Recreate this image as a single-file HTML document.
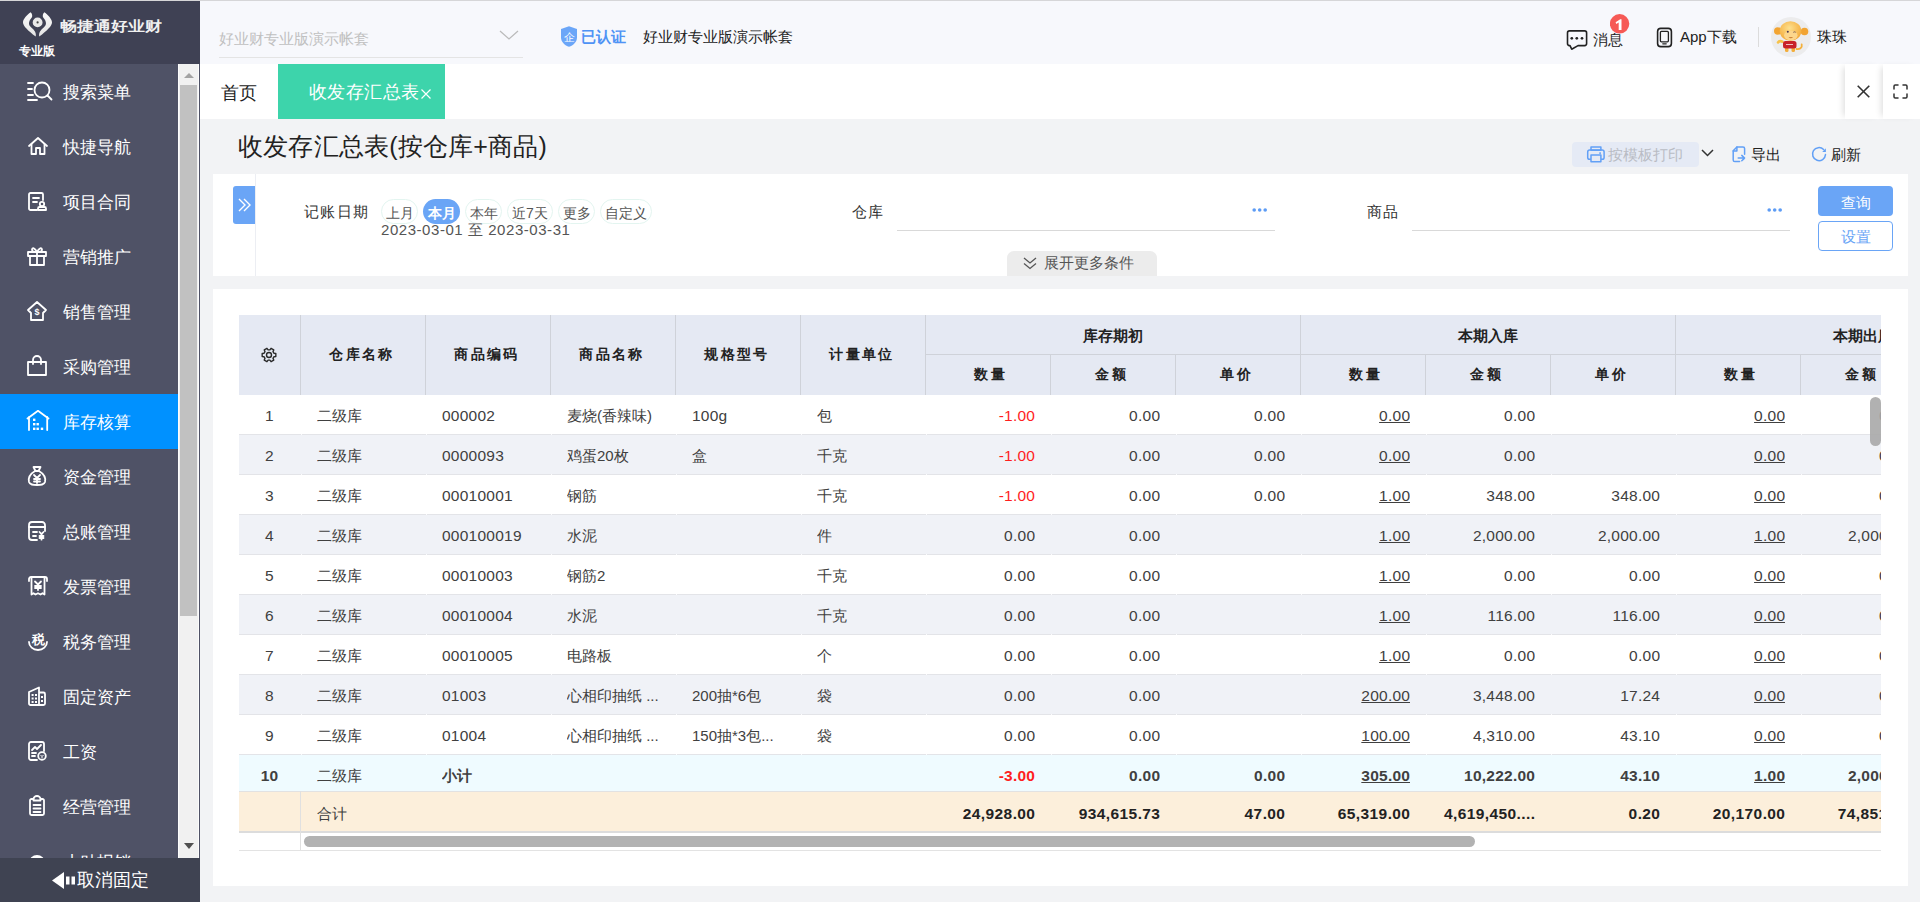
<!DOCTYPE html><html><head><meta charset="utf-8"><style>
*{box-sizing:border-box;margin:0;padding:0}
html,body{width:1920px;height:902px;overflow:hidden}
body{position:relative;background:#f2f3f5;font-family:"Liberation Sans", sans-serif;color:#333}
.a{position:absolute}
.t{position:absolute;white-space:nowrap;line-height:1}
.side{left:0;top:0;width:200px;height:902px;background:#4f5266}
.logo{left:0;top:0;width:200px;height:64px;background:#3f4154}
.mi{position:absolute;left:0;width:178px;height:55px}
.mi .tx{position:absolute;left:63px;top:18px;font-size:17.4px;line-height:21px;color:#fff;white-space:nowrap}
.mi svg{position:absolute;left:26px;top:16px}
.mi.act{background:#0091ff}
.hdr{left:200px;top:0;width:1720px;height:64px;background:#f7f8fc}
.tabs{left:200px;top:64px;width:1720px;height:55px;background:#fff}
.panel{background:#fff}
.th{position:absolute;background:#e5e9f3;font-weight:bold;font-size:14px;color:#222;text-align:center;letter-spacing:3px}
.cell{position:absolute;font-size:15.5px;line-height:42px;height:40px;white-space:nowrap;color:#404040;overflow:hidden}
.num{letter-spacing:0.25px}
.r{text-align:right}
.u{text-decoration:underline}
.red{color:#ff1e1e}
</style></head><body><div class="a side">
<div class="a logo"></div>
<svg class="a" style="left:18px;top:8px" width="40" height="32" viewBox="0 0 40 32">
<defs><linearGradient id="lg" x1="0" y1="0" x2="0" y2="1"><stop offset="0" stop-color="#fafafa"/><stop offset="1" stop-color="#e4e4e4"/></linearGradient></defs>
<path d="M12.6 4.3C9 7 5 11 5 14.5C5 18 10 22.5 17.7 28.6C18.6 25 16.5 22 12.8 19C10.2 16.8 10.3 13.5 13.8 9.5C14.8 8 14 5.5 12.6 4.3Z" fill="url(#lg)"/>
<path d="M26.4 4.3C30 7 34 11 34 14.5C34 18 29 22.5 21.3 28.6C20.4 25 22.5 22 26.2 19C28.8 16.8 28.7 13.5 25.2 9.5C24.2 8 25 5.5 26.4 4.3Z" fill="url(#lg)"/>
<circle cx="19.6" cy="14.4" r="4.9" fill="#e9e9e9"/><circle cx="19.6" cy="14.4" r="1.1" fill="#444"/>
</svg>
<div class="t" style="left:60px;top:19px;font-size:14px;font-weight:bold;color:#f0f0f0;transform:scaleX(1.21);transform-origin:0 0">畅捷通好业财</div>
<div class="t" style="left:19px;top:45px;font-size:12px;font-weight:bold;color:#fff">专业版</div>
<div class="a" style="left:0;top:64px;width:178px;height:794px;overflow:hidden">
<div class="mi" style="top:0px"><svg width="27" height="22" viewBox="0 0 27 22"><g stroke="#fff" stroke-width="1.8" fill="none" stroke-linecap="round" stroke-linejoin="round"><path d="M2 3h5M2 9h4M2 15h5M2 20h9"/><circle cx="16" cy="10" r="7.5"/><path d="M21.5 15.5l4 4"/></g></svg><div class="tx">搜索菜单</div></div>
<div class="mi" style="top:55px"><svg width="24" height="22" viewBox="0 0 24 22"><g stroke="#fff" stroke-width="1.8" fill="none" stroke-linecap="round" stroke-linejoin="round"><path d="M3 11L12 3l9 8"/><path d="M5.5 9.5v9.5h4.5v-6h4v6h4.5V9.5"/></g></svg><div class="tx">快捷导航</div></div>
<div class="mi" style="top:110px"><svg width="22" height="22" viewBox="0 0 22 22"><g stroke="#fff" stroke-width="1.8" fill="none" stroke-linecap="round" stroke-linejoin="round"><path d="M11 20H4.5A1.5 1.5 0 0 1 3 18.5V4.5A1.5 1.5 0 0 1 4.5 3h11A1.5 1.5 0 0 1 17 4.5V10"/><path d="M7 8h6M7 12h4"/><circle cx="16" cy="14" r="2.2"/><path d="M12 20v-1.5a1.5 1.5 0 0 1 1.5-1.5h5a1.5 1.5 0 0 1 1.5 1.5V20z"/></g></svg><div class="tx">项目合同</div></div>
<div class="mi" style="top:165px"><svg width="22" height="22" viewBox="0 0 22 22"><g stroke="#fff" stroke-width="1.8" fill="none" stroke-linecap="round" stroke-linejoin="round"><path d="M2 7h18v4H2zM4 11v9h14v-9M11 7v13"/><path d="M11 7C9 3 6 2 6 5c0 1 2 2 5 2M11 7c2-4 5-5 5-2 0 1-2 2-5 2"/></g></svg><div class="tx">营销推广</div></div>
<div class="mi" style="top:220px"><svg width="22" height="22" viewBox="0 0 22 22"><g stroke="#fff" stroke-width="1.8" fill="none" stroke-linecap="round" stroke-linejoin="round"><path d="M2 10l9-8 9 8-3 3v7H5v-7z"/></g><text x="11" y="15" font-size="9" font-weight="bold" fill="#fff" text-anchor="middle" font-family="Liberation Sans">$</text></svg><div class="tx">销售管理</div></div>
<div class="mi" style="top:275px"><svg width="22" height="22" viewBox="0 0 22 22"><g stroke="#fff" stroke-width="1.8" fill="none" stroke-linecap="round" stroke-linejoin="round"><path d="M2 7h18v13H2z"/><path d="M7 9V5a4 4 0 0 1 8 0v4"/></g></svg><div class="tx">采购管理</div></div>
<div class="mi act" style="top:330px"><svg width="24" height="22" viewBox="0 0 24 22"><g stroke="#fff" stroke-width="1.8" fill="none" stroke-linecap="round" stroke-linejoin="round"><path d="M1.5 8.5L12 0.8l10.5 7.7M3 7v13M21.2 7v13"/></g><g fill="#fff"><rect x="7" y="8.6" width="2.4" height="2.4"/><rect x="7" y="13" width="2.4" height="2.4"/><rect x="10.5" y="13" width="2.4" height="2.4"/><rect x="7" y="17.6" width="2.4" height="2.4"/><rect x="10.5" y="17.6" width="2.4" height="2.4"/><rect x="14.8" y="17.6" width="2.4" height="2.4"/></g></svg><div class="tx">库存核算</div></div>
<div class="mi" style="top:385px"><svg width="22" height="22" viewBox="0 0 22 22"><g stroke="#fff" stroke-width="1.8" fill="none" stroke-linecap="round" stroke-linejoin="round"><path d="M7.5 2h7l-2 4h-3z"/><path d="M9 6C4 9 2 13 3 17c1 3 4 3 8 3s7 0 8-3c1-4-1-8-6-11"/><path d="M8 10l3 3 3-3M11 13v5M8 14h6M8 16.5h6"/></g></svg><div class="tx">资金管理</div></div>
<div class="mi" style="top:440px"><svg width="22" height="22" viewBox="0 0 22 22"><g stroke="#fff" stroke-width="1.8" fill="none" stroke-linecap="round" stroke-linejoin="round"><path d="M19 11V5a3 3 0 0 0-3-3H6a3 3 0 0 0-3 3v12a3 3 0 0 0 3 3h5"/><path d="M3 7h16M7 12h4M7 16h3"/><path d="M13.5 12l2 2.2 2-2.2M15.5 14.2v5.5M13.5 16h4M13.5 18h4"/></g></svg><div class="tx">总账管理</div></div>
<div class="mi" style="top:495px"><svg width="24" height="22" viewBox="0 0 24 22"><g stroke="#fff" stroke-width="1.8" fill="none" stroke-linecap="round" stroke-linejoin="round"><path d="M3 6V4a2 2 0 0 1 2-2h14a2 2 0 0 1 2 2v2M5.5 3v16.5l2-1.3 2 1.3 2.5-1.3 2.5 1.3 2-1.3 2 1.3V3"/><path d="M9 6.5l3 3 3-3M12 9.5v5.5M9 11h6M9 13h6"/></g></svg><div class="tx">发票管理</div></div>
<div class="mi" style="top:550px"><svg width="24" height="22" viewBox="0 0 24 22"><g stroke="#fff" stroke-width="1.8" fill="none" stroke-linecap="round" stroke-linejoin="round"><path d="M3 12a9 8 0 0 0 18 0"/></g><text x="12.5" y="13.5" font-size="12.5" font-weight="bold" fill="#fff" text-anchor="middle" font-family="Liberation Sans">税</text></svg><div class="tx">税务管理</div></div>
<div class="mi" style="top:605px"><svg width="22" height="22" viewBox="0 0 22 22"><g stroke="#fff" stroke-width="1.8" fill="none" stroke-linecap="round" stroke-linejoin="round"><path d="M4.5 20A1.5 1.5 0 0 1 3 18.5V7l10-4.5v17.5M13 7.5h4.5A1.5 1.5 0 0 1 19 9v9.5a1.5 1.5 0 0 1-1.5 1.5H4.5"/></g><g fill="#fff"><rect x="5.6" y="9" width="2" height="2"/><rect x="9" y="9" width="2" height="2"/><rect x="5.6" y="12.5" width="2" height="2"/><rect x="9" y="12.5" width="2" height="2"/><rect x="5.6" y="16" width="2" height="2"/><rect x="9" y="16" width="2" height="2"/><rect x="15" y="11" width="2" height="2"/><rect x="15" y="15" width="2" height="2"/></g></svg><div class="tx">固定资产</div></div>
<div class="mi" style="top:660px"><svg width="22" height="22" viewBox="0 0 22 22"><g stroke="#fff" stroke-width="1.8" fill="none" stroke-linecap="round" stroke-linejoin="round"><path d="M11 20H5a2 2 0 0 1-2-2V4a2 2 0 0 1 2-2h11a2 2 0 0 1 2 2v7"/><path d="M6 10l3-3 2 2 4-4"/><path d="M6 13h4M6 16h3"/><circle cx="16" cy="16" r="3.8"/></g><path d="M14.5 15l1.5 1.5 1.5-1.5M16 16.5v2" stroke="#fff" stroke-width="1" fill="none"/></svg><div class="tx">工资</div></div>
<div class="mi" style="top:715px"><svg width="22" height="22" viewBox="0 0 22 22"><g stroke="#fff" stroke-width="1.8" fill="none" stroke-linecap="round" stroke-linejoin="round"><path d="M7.5 4H5.5A1.5 1.5 0 0 0 4 5.5v13A1.5 1.5 0 0 0 5.5 20h11a1.5 1.5 0 0 0 1.5-1.5v-13A1.5 1.5 0 0 0 16.5 4h-2"/><path d="M7.5 5.5h7V4a3.5 3 0 0 0-7 0z"/><path d="M7.5 10h7M7.5 13.5h7M7.5 17h7"/></g></svg><div class="tx">经营管理</div></div>
<div class="mi" style="top:770px"><svg width="22" height="22" viewBox="0 0 22 22"><path d="M3 13a8 8 0 0 1 16 0z" fill="#fff"/><circle cx="11" cy="10" r="1.5" fill="#4f5266"/></svg><div class="tx">小贴报销</div></div>
</div>
<div class="a" style="left:178px;top:64px;width:21px;height:794px;background:#f1f1f1;border-left:1px solid #fcfcfc;border-right:1px solid #fcfcfc"></div>
<div class="a" style="left:180px;top:85px;width:17px;height:531px;background:#c1c1c1"></div>
<div class="a" style="left:184px;top:73px;width:0;height:0;border-left:5px solid transparent;border-right:5px solid transparent;border-bottom:5px solid #a3a3a3"></div>
<div class="a" style="left:184px;top:843px;width:0;height:0;border-left:5px solid transparent;border-right:5px solid transparent;border-top:6px solid #505050"></div>
<div class="a" style="left:199px;top:64px;width:1px;height:794px;background:#4f5266"></div>
<div class="a" style="left:0;top:858px;width:200px;height:44px;background:#3f4352"></div>
<svg class="a" style="left:52px;top:872px" width="24" height="18" viewBox="0 0 24 18"><path d="M0 8.5L12 0v17z" fill="#fff"/><rect x="14" y="4.5" width="3.5" height="8" fill="#fff"/><rect x="19.5" y="4.5" width="3.5" height="8" fill="#fff"/></svg>
<div class="t" style="left:77px;top:871px;font-size:18px;color:#fff">取消固定</div>
</div>
<div class="a hdr"></div>
<div class="a" style="left:0;top:0;width:1920px;height:1px;background:#d6d6d8"></div>
<div class="t" style="left:219px;top:31px;font-size:15px;color:#c0c0c0">好业财专业版演示帐套</div>
<div class="a" style="left:219px;top:57px;width:304px;height:1px;background:#e4e4e4"></div>
<svg class="a" style="left:499px;top:30px" width="20" height="10" viewBox="0 0 20 10"><path d="M1 1l9 8 9-8" stroke="#bbb" stroke-width="1.3" fill="none"/></svg>
<svg class="a" style="left:560px;top:26px" width="18" height="21" viewBox="0 0 18 21"><path d="M9 0.3L17 3v8.2c0 5-3.8 8-8 9.6C4.8 19.2 1 16.2 1 11.2V3z" fill="#6ba6f8"/><text x="9" y="15" font-size="11" fill="#fff" text-anchor="middle" font-family="Liberation Sans">企</text></svg>
<div class="t" style="left:581px;top:29px;font-size:15px;color:#4f93f5;font-weight:bold">已认证</div>
<div class="t" style="left:643px;top:29px;font-size:15px;color:#222">好业财专业版演示帐套</div>
<svg class="a" style="left:1562px;top:26px" width="30" height="26" viewBox="0 0 30 26"><path d="M8 19.6H7.5a2 2 0 0 1-2-2V6.9a2 2 0 0 1 2-2h15.1a2 2 0 0 1 2 2v10.7a2 2 0 0 1-2 2H16l-6.3 3.6z" stroke="#222" stroke-width="1.6" fill="none" stroke-linejoin="round" stroke-linecap="round"/><circle cx="9.8" cy="12.3" r="1.35" fill="#222"/><circle cx="14.8" cy="12.3" r="1.35" fill="#222"/><circle cx="20" cy="12.3" r="1.35" fill="#222"/></svg>
<div class="t" style="left:1593px;top:31.5px;font-size:15px;color:#222">消息</div>
<svg class="a" style="left:1610px;top:14px" width="20" height="20" viewBox="0 0 20 20"><circle cx="9.6" cy="9.8" r="9.7" fill="#f65a56"/><path d="M5.6 8.2L10.2 5.2h1.3v10.8H8.7V8.5L6.3 9.9z" fill="#fff"/></svg>
<svg class="a" style="left:1655px;top:26px" width="19" height="23" viewBox="0 0 19 23"><rect x="2.6" y="2.4" width="13.8" height="18.2" rx="3.2" stroke="#222" stroke-width="1.6" fill="none"/><rect x="5.4" y="5.4" width="8" height="10.4" rx="1" stroke="#222" stroke-width="1.3" fill="none"/><path d="M7.8 17.8h3.4" stroke="#222" stroke-width="1.3" stroke-linecap="round"/></svg>
<div class="t" style="left:1680px;top:29px;font-size:15px;color:#222">App下载</div>
<div class="a" style="left:1758px;top:27px;width:1px;height:20px;background:#dcdcdc"></div>
<svg class="a" style="left:1768px;top:14px" width="46" height="46" viewBox="0 0 46 46">
<defs><radialGradient id="hg" cx="0.45" cy="0.35" r="0.7"><stop offset="0" stop-color="#fde08e"/><stop offset="1" stop-color="#f3a531"/></radialGradient></defs>
<circle cx="23" cy="23" r="20" fill="#ececed"/>
<circle cx="9.8" cy="17" r="3.8" fill="#f2a432"/><circle cx="36.5" cy="17.5" r="3.8" fill="#f2a432"/>
<path d="M10 28.5c1-1.5 3-1.5 4.5-0.8" stroke="#f7c24a" stroke-width="2.6" stroke-linecap="round" fill="none"/>
<path d="M28.5 35c3 0.5 6-1 5.2-4.5" stroke="#f4b03a" stroke-width="1.8" stroke-linecap="round" fill="none"/>
<rect x="17" y="33" width="3.5" height="5" rx="1.5" fill="#f3ad3a"/><rect x="23.5" y="33" width="3.5" height="5" rx="1.5" fill="#f3ad3a"/>
<ellipse cx="22.5" cy="17" rx="10.8" ry="9.8" fill="url(#hg)"/>
<ellipse cx="22.8" cy="21.5" rx="6.8" ry="4.8" fill="#fcd68c"/>
<circle cx="19.8" cy="17.8" r="1" fill="#4a3550"/><path d="M25.3 18.3q1.2-0.9 2.4 0" stroke="#5a4040" stroke-width="0.8" fill="none"/>
<path d="M20.5 23.2q2.3 2.2 4.6 0z" fill="#c06a20"/>
<rect x="15" y="27" width="13.5" height="7.5" rx="2.5" fill="#c8202a"/>
<path d="M18 30.5h7" stroke="#f2d0d0" stroke-width="0.9"/>
</svg>
<div class="t" style="left:1817px;top:29px;font-size:15px;color:#222">珠珠</div>
<div class="a tabs"></div>
<div class="t" style="left:221px;top:84px;font-size:18px;color:#222">首页</div>
<div class="a" style="left:278px;top:64px;width:167px;height:55px;background:#3dd4ab"></div>
<div class="t" style="left:309px;top:83px;font-size:18px;color:#fff;letter-spacing:0.4px">收发存汇总表</div>
<svg class="a" style="left:421px;top:89px" width="10" height="10" viewBox="0 0 10 10"><path d="M0.5 0.5l9 9M9.5 0.5l-9 9" stroke="#fff" stroke-width="1.2"/></svg>
<div class="a" style="left:1845px;top:64px;width:38px;height:55px;background:#fff;box-shadow:-5px 0 6px -3px rgba(0,0,0,0.12)"></div>
<div class="a" style="left:1883px;top:64px;width:37px;height:55px;background:#fff;box-shadow:-5px 0 6px -3px rgba(0,0,0,0.12)"></div>
<svg class="a" style="left:1857px;top:85px" width="13" height="13" viewBox="0 0 13 13"><path d="M0.7 0.7l11.6 11.6M12.3 0.7L0.7 12.3" stroke="#333" stroke-width="1.6"/></svg>
<svg class="a" style="left:1893px;top:84px" width="15" height="15" viewBox="0 0 15 15"><path d="M1 5V2.2Q1 1 2.2 1H5M10 1h2.8Q14 1 14 2.2V5M14 10v2.8Q14 14 12.8 14H10M5 14H2.2Q1 14 1 12.8V10" stroke="#333" stroke-width="1.5" fill="none" stroke-linecap="round"/></svg>
<div class="t" style="left:238px;top:134px;font-size:25px;letter-spacing:0.2px;color:#222">收发存汇总表(按仓库+商品)</div>
<div class="a" style="left:1572px;top:142px;width:127px;height:25px;background:#e5eaf5;border-radius:4px"></div>
<svg class="a" style="left:1580px;top:142px" width="30" height="24" viewBox="0 0 30 24"><g stroke="#62a0f6" stroke-width="1.5" fill="none" stroke-linejoin="round"><rect x="11" y="5" width="9.9" height="3.2"/><path d="M11 17.3H9.5a1.8 1.8 0 0 1-1.8-1.8V10a2 2 0 0 1 2-2h12.4a2 2 0 0 1 2 2v5.5a1.8 1.8 0 0 1-1.8 1.8H21"/><rect x="11" y="13.1" width="9.9" height="6.6"/></g><rect x="19.3" y="10.3" width="1.6" height="1.6" fill="#62a0f6"/></svg>
<div class="t" style="left:1608px;top:147px;font-size:15px;color:#b9bcc4">按模板打印</div>
<svg class="a" style="left:1701px;top:149px" width="13" height="8" viewBox="0 0 13 8"><path d="M1 1l5.5 5.5L12 1" stroke="#333" stroke-width="1.5" fill="none"/></svg>
<svg class="a" style="left:1726px;top:142px" width="24" height="24" viewBox="0 0 24 24"><g stroke="#62a0f6" stroke-width="1.5" fill="none" stroke-linejoin="round" stroke-linecap="round"><path d="M18.6 12.2V6.6a1.6 1.6 0 0 0-1.6-1.6h-6.1L7.2 8.7v9.2a1.6 1.6 0 0 0 1.6 1.6h4.8"/><path d="M10.9 5v4H7.2"/><path d="M12.2 16.1h6.4M15.8 13.4l2.8 2.7-2.8 2.7"/></g></svg>
<div class="t" style="left:1751px;top:147px;font-size:15px;color:#222">导出</div>
<svg class="a" style="left:1806px;top:142px" width="24" height="24" viewBox="0 0 24 24"><g stroke="#62a0f6" stroke-width="1.5" fill="none" stroke-linecap="round"><path d="M19.5 12.6A6.5 6.5 0 1 1 17.6 7.5"/></g><path d="M19.9 6.2v3.7h-3.7z" fill="#62a0f6"/></svg>
<div class="t" style="left:1831px;top:147px;font-size:15px;color:#222">刷新</div>
<div class="a panel" style="left:213px;top:174px;width:1695px;height:102px"></div>
<div class="a" style="left:255px;top:174px;width:1px;height:102px;background:#eceef3"></div>
<div class="a" style="left:233px;top:186px;width:22px;height:38px;background:#6aa5f6;border-radius:3px 0 0 3px"></div>
<svg class="a" style="left:238px;top:198px" width="14" height="14" viewBox="0 0 14 14"><path d="M1 1l6 6-6 6M6 1l6 6-6 6" stroke="#fff" stroke-width="1.4" fill="none"/></svg>
<div class="t" style="left:304px;top:204px;font-size:15px;color:#333;letter-spacing:1.3px">记账日期</div>
<div class="a" style="left:381px;top:199px;width:37px;height:25px;border-radius:13px;border:1px solid #e3f5f0;color:#555;font-size:14px;line-height:26px;text-align:center">上月</div>
<div class="a" style="left:423px;top:199px;width:37px;height:25px;border-radius:13px;background:#6aa5f6;color:#fff;font-weight:bold;font-size:14px;line-height:28px;text-align:center">本月</div>
<div class="a" style="left:465px;top:199px;width:37px;height:25px;border-radius:13px;border:1px solid #e3f5f0;color:#555;font-size:14px;line-height:26px;text-align:center">本年</div>
<div class="a" style="left:507px;top:199px;width:46px;height:25px;border-radius:13px;border:1px solid #e3f5f0;color:#555;font-size:14px;line-height:26px;text-align:center">近7天</div>
<div class="a" style="left:558px;top:199px;width:37px;height:25px;border-radius:13px;border:1px solid #e3f5f0;color:#555;font-size:14px;line-height:26px;text-align:center">更多</div>
<div class="a" style="left:600px;top:199px;width:52px;height:25px;border-radius:13px;border:1px solid #e3f5f0;color:#555;font-size:14px;line-height:26px;text-align:center">自定义</div>
<div class="t" style="left:381px;top:222px;font-size:15px;color:#555;letter-spacing:0.55px">2023-03-01 至 2023-03-31</div>
<div class="t" style="left:852px;top:204px;font-size:15px;color:#333;letter-spacing:1px">仓库</div>
<div class="a" style="left:897px;top:230px;width:378px;height:1px;background:#d9d9d9"></div>
<svg class="a" style="left:1252px;top:207px" width="16" height="6" viewBox="0 0 16 6"><g fill="#5d9cf5"><circle cx="2.2" cy="3" r="1.8"/><circle cx="7.7" cy="3" r="1.8"/><circle cx="13.2" cy="3" r="1.8"/></g></svg>
<div class="t" style="left:1367px;top:204px;font-size:15px;color:#333;letter-spacing:1px">商品</div>
<div class="a" style="left:1412px;top:230px;width:378px;height:1px;background:#d9d9d9"></div>
<svg class="a" style="left:1767px;top:207px" width="16" height="6" viewBox="0 0 16 6"><g fill="#5d9cf5"><circle cx="2.2" cy="3" r="1.8"/><circle cx="7.7" cy="3" r="1.8"/><circle cx="13.2" cy="3" r="1.8"/></g></svg>
<div class="a" style="left:1818px;top:186px;width:75px;height:30px;background:#6aa5f6;border-radius:4px;color:#fff;font-size:15px;text-align:center;line-height:33px">查询</div>
<div class="a" style="left:1818px;top:221px;width:75px;height:30px;background:#fff;border:1px solid #6aa5f6;border-radius:4px;color:#6aa5f6;font-size:15px;text-align:center;line-height:30px">设置</div>
<div class="a" style="left:1007px;top:251px;width:150px;height:25px;background:#ececec;border-radius:7px 7px 0 0"></div>
<svg class="a" style="left:1023px;top:257px" width="14" height="13" viewBox="0 0 14 13"><path d="M1 1l6 5 6-5M1 6.5l6 5 6-5" stroke="#555" stroke-width="1.3" fill="none"/></svg>
<div class="t" style="left:1044px;top:255px;font-size:15px;color:#555">展开更多条件</div>
<div class="a panel" style="left:213px;top:289px;width:1695px;height:597px"></div>
<div class="a" style="left:239px;top:315px;width:1642px;height:536px;overflow:hidden">
<div class="a" style="left:0;top:0;width:1700px;height:80px;background:#e5e9f3"></div>
<svg class="a" style="left:18px;top:28px" width="24" height="24" viewBox="0 0 24 24"><g stroke="#2a2a2a" stroke-width="1.4" fill="none" stroke-linejoin="round"><path d="M16.89 10.22 L18.82 10.43 L18.82 13.57 L16.89 13.78 L15.98 15.34 L16.77 17.12 L14.05 18.69 L12.90 17.12 L11.10 17.12 L9.95 18.69 L7.23 17.12 L8.02 15.34 L7.11 13.78 L5.18 13.57 L5.18 10.43 L7.11 10.22 L8.02 8.66 L7.23 6.88 L9.95 5.31 L11.10 6.88 L12.90 6.88 L14.05 5.31 L16.77 6.88 L15.98 8.66Z"/><circle cx="12" cy="12" r="2.5"/></g></svg>
<div class="a" style="left:61px;top:0;width:1px;height:80px;background:#cfd2d9"></div>
<div class="t" style="left:59.3px;top:32px;width:125px;text-align:center;font-size:14px;font-weight:bold;color:#222;letter-spacing:2.4px;text-indent:2.4px">仓库名称</div>
<div class="a" style="left:186px;top:0;width:1px;height:80px;background:#cfd2d9"></div>
<div class="t" style="left:184.3px;top:32px;width:125px;text-align:center;font-size:14px;font-weight:bold;color:#222;letter-spacing:2.4px;text-indent:2.4px">商品编码</div>
<div class="a" style="left:311px;top:0;width:1px;height:80px;background:#cfd2d9"></div>
<div class="t" style="left:309.3px;top:32px;width:125px;text-align:center;font-size:14px;font-weight:bold;color:#222;letter-spacing:2.4px;text-indent:2.4px">商品名称</div>
<div class="a" style="left:436px;top:0;width:1px;height:80px;background:#cfd2d9"></div>
<div class="t" style="left:434.3px;top:32px;width:125px;text-align:center;font-size:14px;font-weight:bold;color:#222;letter-spacing:2.4px;text-indent:2.4px">规格型号</div>
<div class="a" style="left:561px;top:0;width:1px;height:80px;background:#cfd2d9"></div>
<div class="t" style="left:559.3px;top:32px;width:125px;text-align:center;font-size:14px;font-weight:bold;color:#222;letter-spacing:2.4px;text-indent:2.4px">计量单位</div>
<div class="a" style="left:686px;top:0;width:1px;height:80px;background:#cfd2d9"></div>
<div class="a" style="left:686px;top:39px;width:1000px;height:1px;background:#cfd2d9"></div>
<div class="t" style="left:686px;top:13px;width:375px;text-align:center;font-size:15px;font-weight:bold;color:#222">库存期初</div>
<div class="a" style="left:1061px;top:0;width:1px;height:80px;background:#cfd2d9"></div>
<div class="t" style="left:688px;top:52px;width:125px;text-align:center;font-size:14px;font-weight:bold;color:#222;letter-spacing:3px;text-indent:3px">数量</div>
<div class="a" style="left:811px;top:40px;width:1px;height:40px;background:#cfd2d9"></div>
<div class="t" style="left:809.2px;top:52px;width:125px;text-align:center;font-size:14px;font-weight:bold;color:#222;letter-spacing:3px;text-indent:3px">金额</div>
<div class="a" style="left:936px;top:40px;width:1px;height:40px;background:#cfd2d9"></div>
<div class="t" style="left:934.2px;top:52px;width:125px;text-align:center;font-size:14px;font-weight:bold;color:#222;letter-spacing:3px;text-indent:3px">单价</div>
<div class="t" style="left:1061px;top:13px;width:375px;text-align:center;font-size:15px;font-weight:bold;color:#222">本期入库</div>
<div class="a" style="left:1436px;top:0;width:1px;height:80px;background:#cfd2d9"></div>
<div class="t" style="left:1063px;top:52px;width:125px;text-align:center;font-size:14px;font-weight:bold;color:#222;letter-spacing:3px;text-indent:3px">数量</div>
<div class="a" style="left:1186px;top:40px;width:1px;height:40px;background:#cfd2d9"></div>
<div class="t" style="left:1184.2px;top:52px;width:125px;text-align:center;font-size:14px;font-weight:bold;color:#222;letter-spacing:3px;text-indent:3px">金额</div>
<div class="a" style="left:1311px;top:40px;width:1px;height:40px;background:#cfd2d9"></div>
<div class="t" style="left:1309.2px;top:52px;width:125px;text-align:center;font-size:14px;font-weight:bold;color:#222;letter-spacing:3px;text-indent:3px">单价</div>
<div class="t" style="left:1436px;top:13px;width:375px;text-align:center;font-size:15px;font-weight:bold;color:#222">本期出库</div>
<div class="a" style="left:1811px;top:0;width:1px;height:80px;background:#cfd2d9"></div>
<div class="t" style="left:1438px;top:52px;width:125px;text-align:center;font-size:14px;font-weight:bold;color:#222;letter-spacing:3px;text-indent:3px">数量</div>
<div class="a" style="left:1561px;top:40px;width:1px;height:40px;background:#cfd2d9"></div>
<div class="t" style="left:1559.2px;top:52px;width:125px;text-align:center;font-size:14px;font-weight:bold;color:#222;letter-spacing:3px;text-indent:3px">金额</div>
<div class="a" style="left:1686px;top:40px;width:1px;height:40px;background:#cfd2d9"></div>
<div class="t" style="left:1684.2px;top:52px;width:125px;text-align:center;font-size:14px;font-weight:bold;color:#222;letter-spacing:3px;text-indent:3px">单价</div>
<div class="a" style="left:0;top:80px;width:1700px;height:40px;background:#fff;border-bottom:1px solid #e3e4e8"></div>
<div class="cell num" style="left:0px;top:80px;width:61px;text-align:center;">1</div>
<div class="cell num" style="left:78px;top:80px;width:108px;font-size:15px;letter-spacing:0;">二级库</div>
<div class="cell num" style="left:203px;top:80px;width:108px;">000002</div>
<div class="cell num" style="left:328px;top:80px;width:108px;font-size:15px;letter-spacing:0;">麦烧(香辣味)</div>
<div class="cell num" style="left:453px;top:80px;width:108px;">100g</div>
<div class="cell num" style="left:578px;top:80px;width:108px;font-size:15px;letter-spacing:0;">包</div>
<div class="cell num" style="left:686px;top:80px;width:110.25px;text-align:right;color:#ff1e1e;">-1.00</div>
<div class="cell num" style="left:811px;top:80px;width:110.25px;text-align:right;">0.00</div>
<div class="cell num" style="left:936px;top:80px;width:110.25px;text-align:right;">0.00</div>
<div class="cell num" style="left:1061px;top:80px;width:110.25px;text-align:right;text-decoration:underline;">0.00</div>
<div class="cell num" style="left:1186px;top:80px;width:110.25px;text-align:right;">0.00</div>
<div class="cell num" style="left:1436px;top:80px;width:110.25px;text-align:right;text-decoration:underline;">0.00</div>
<div class="cell num" style="left:1561px;top:80px;width:110.25px;text-align:right;">0.00</div>
<div class="a" style="left:0;top:120px;width:1700px;height:40px;background:#f0f2f7;border-bottom:1px solid #e3e4e8"></div>
<div class="cell num" style="left:0px;top:120px;width:61px;text-align:center;">2</div>
<div class="cell num" style="left:78px;top:120px;width:108px;font-size:15px;letter-spacing:0;">二级库</div>
<div class="cell num" style="left:203px;top:120px;width:108px;">0000093</div>
<div class="cell num" style="left:328px;top:120px;width:108px;font-size:15px;letter-spacing:0;">鸡蛋20枚</div>
<div class="cell num" style="left:453px;top:120px;width:108px;font-size:15px;letter-spacing:0;">盒</div>
<div class="cell num" style="left:578px;top:120px;width:108px;font-size:15px;letter-spacing:0;">千克</div>
<div class="cell num" style="left:686px;top:120px;width:110.25px;text-align:right;color:#ff1e1e;">-1.00</div>
<div class="cell num" style="left:811px;top:120px;width:110.25px;text-align:right;">0.00</div>
<div class="cell num" style="left:936px;top:120px;width:110.25px;text-align:right;">0.00</div>
<div class="cell num" style="left:1061px;top:120px;width:110.25px;text-align:right;text-decoration:underline;">0.00</div>
<div class="cell num" style="left:1186px;top:120px;width:110.25px;text-align:right;">0.00</div>
<div class="cell num" style="left:1436px;top:120px;width:110.25px;text-align:right;text-decoration:underline;">0.00</div>
<div class="cell num" style="left:1561px;top:120px;width:110.25px;text-align:right;">0.00</div>
<div class="a" style="left:0;top:160px;width:1700px;height:40px;background:#fff;border-bottom:1px solid #e3e4e8"></div>
<div class="cell num" style="left:0px;top:160px;width:61px;text-align:center;">3</div>
<div class="cell num" style="left:78px;top:160px;width:108px;font-size:15px;letter-spacing:0;">二级库</div>
<div class="cell num" style="left:203px;top:160px;width:108px;">00010001</div>
<div class="cell num" style="left:328px;top:160px;width:108px;font-size:15px;letter-spacing:0;">钢筋</div>
<div class="cell num" style="left:578px;top:160px;width:108px;font-size:15px;letter-spacing:0;">千克</div>
<div class="cell num" style="left:686px;top:160px;width:110.25px;text-align:right;color:#ff1e1e;">-1.00</div>
<div class="cell num" style="left:811px;top:160px;width:110.25px;text-align:right;">0.00</div>
<div class="cell num" style="left:936px;top:160px;width:110.25px;text-align:right;">0.00</div>
<div class="cell num" style="left:1061px;top:160px;width:110.25px;text-align:right;text-decoration:underline;">1.00</div>
<div class="cell num" style="left:1186px;top:160px;width:110.25px;text-align:right;">348.00</div>
<div class="cell num" style="left:1311px;top:160px;width:110.25px;text-align:right;">348.00</div>
<div class="cell num" style="left:1436px;top:160px;width:110.25px;text-align:right;text-decoration:underline;">0.00</div>
<div class="cell num" style="left:1561px;top:160px;width:110.25px;text-align:right;">0.00</div>
<div class="a" style="left:0;top:200px;width:1700px;height:40px;background:#f0f2f7;border-bottom:1px solid #e3e4e8"></div>
<div class="cell num" style="left:0px;top:200px;width:61px;text-align:center;">4</div>
<div class="cell num" style="left:78px;top:200px;width:108px;font-size:15px;letter-spacing:0;">二级库</div>
<div class="cell num" style="left:203px;top:200px;width:108px;">000100019</div>
<div class="cell num" style="left:328px;top:200px;width:108px;font-size:15px;letter-spacing:0;">水泥</div>
<div class="cell num" style="left:578px;top:200px;width:108px;font-size:15px;letter-spacing:0;">件</div>
<div class="cell num" style="left:686px;top:200px;width:110.25px;text-align:right;">0.00</div>
<div class="cell num" style="left:811px;top:200px;width:110.25px;text-align:right;">0.00</div>
<div class="cell num" style="left:1061px;top:200px;width:110.25px;text-align:right;text-decoration:underline;">1.00</div>
<div class="cell num" style="left:1186px;top:200px;width:110.25px;text-align:right;">2,000.00</div>
<div class="cell num" style="left:1311px;top:200px;width:110.25px;text-align:right;">2,000.00</div>
<div class="cell num" style="left:1436px;top:200px;width:110.25px;text-align:right;text-decoration:underline;">1.00</div>
<div class="cell num" style="left:1561px;top:200px;width:110.25px;text-align:right;">2,000.00</div>
<div class="a" style="left:0;top:240px;width:1700px;height:40px;background:#fff;border-bottom:1px solid #e3e4e8"></div>
<div class="cell num" style="left:0px;top:240px;width:61px;text-align:center;">5</div>
<div class="cell num" style="left:78px;top:240px;width:108px;font-size:15px;letter-spacing:0;">二级库</div>
<div class="cell num" style="left:203px;top:240px;width:108px;">00010003</div>
<div class="cell num" style="left:328px;top:240px;width:108px;font-size:15px;letter-spacing:0;">钢筋2</div>
<div class="cell num" style="left:578px;top:240px;width:108px;font-size:15px;letter-spacing:0;">千克</div>
<div class="cell num" style="left:686px;top:240px;width:110.25px;text-align:right;">0.00</div>
<div class="cell num" style="left:811px;top:240px;width:110.25px;text-align:right;">0.00</div>
<div class="cell num" style="left:1061px;top:240px;width:110.25px;text-align:right;text-decoration:underline;">1.00</div>
<div class="cell num" style="left:1186px;top:240px;width:110.25px;text-align:right;">0.00</div>
<div class="cell num" style="left:1311px;top:240px;width:110.25px;text-align:right;">0.00</div>
<div class="cell num" style="left:1436px;top:240px;width:110.25px;text-align:right;text-decoration:underline;">0.00</div>
<div class="cell num" style="left:1561px;top:240px;width:110.25px;text-align:right;">0.00</div>
<div class="a" style="left:0;top:280px;width:1700px;height:40px;background:#f0f2f7;border-bottom:1px solid #e3e4e8"></div>
<div class="cell num" style="left:0px;top:280px;width:61px;text-align:center;">6</div>
<div class="cell num" style="left:78px;top:280px;width:108px;font-size:15px;letter-spacing:0;">二级库</div>
<div class="cell num" style="left:203px;top:280px;width:108px;">00010004</div>
<div class="cell num" style="left:328px;top:280px;width:108px;font-size:15px;letter-spacing:0;">水泥</div>
<div class="cell num" style="left:578px;top:280px;width:108px;font-size:15px;letter-spacing:0;">千克</div>
<div class="cell num" style="left:686px;top:280px;width:110.25px;text-align:right;">0.00</div>
<div class="cell num" style="left:811px;top:280px;width:110.25px;text-align:right;">0.00</div>
<div class="cell num" style="left:1061px;top:280px;width:110.25px;text-align:right;text-decoration:underline;">1.00</div>
<div class="cell num" style="left:1186px;top:280px;width:110.25px;text-align:right;">116.00</div>
<div class="cell num" style="left:1311px;top:280px;width:110.25px;text-align:right;">116.00</div>
<div class="cell num" style="left:1436px;top:280px;width:110.25px;text-align:right;text-decoration:underline;">0.00</div>
<div class="cell num" style="left:1561px;top:280px;width:110.25px;text-align:right;">0.00</div>
<div class="a" style="left:0;top:320px;width:1700px;height:40px;background:#fff;border-bottom:1px solid #e3e4e8"></div>
<div class="cell num" style="left:0px;top:320px;width:61px;text-align:center;">7</div>
<div class="cell num" style="left:78px;top:320px;width:108px;font-size:15px;letter-spacing:0;">二级库</div>
<div class="cell num" style="left:203px;top:320px;width:108px;">00010005</div>
<div class="cell num" style="left:328px;top:320px;width:108px;font-size:15px;letter-spacing:0;">电路板</div>
<div class="cell num" style="left:578px;top:320px;width:108px;font-size:15px;letter-spacing:0;">个</div>
<div class="cell num" style="left:686px;top:320px;width:110.25px;text-align:right;">0.00</div>
<div class="cell num" style="left:811px;top:320px;width:110.25px;text-align:right;">0.00</div>
<div class="cell num" style="left:1061px;top:320px;width:110.25px;text-align:right;text-decoration:underline;">1.00</div>
<div class="cell num" style="left:1186px;top:320px;width:110.25px;text-align:right;">0.00</div>
<div class="cell num" style="left:1311px;top:320px;width:110.25px;text-align:right;">0.00</div>
<div class="cell num" style="left:1436px;top:320px;width:110.25px;text-align:right;text-decoration:underline;">0.00</div>
<div class="cell num" style="left:1561px;top:320px;width:110.25px;text-align:right;">0.00</div>
<div class="a" style="left:0;top:360px;width:1700px;height:40px;background:#f0f2f7;border-bottom:1px solid #e3e4e8"></div>
<div class="cell num" style="left:0px;top:360px;width:61px;text-align:center;">8</div>
<div class="cell num" style="left:78px;top:360px;width:108px;font-size:15px;letter-spacing:0;">二级库</div>
<div class="cell num" style="left:203px;top:360px;width:108px;">01003</div>
<div class="cell num" style="left:328px;top:360px;width:108px;font-size:15px;letter-spacing:0;">心相印抽纸 ...</div>
<div class="cell num" style="left:453px;top:360px;width:108px;font-size:15px;letter-spacing:0;">200抽*6包</div>
<div class="cell num" style="left:578px;top:360px;width:108px;font-size:15px;letter-spacing:0;">袋</div>
<div class="cell num" style="left:686px;top:360px;width:110.25px;text-align:right;">0.00</div>
<div class="cell num" style="left:811px;top:360px;width:110.25px;text-align:right;">0.00</div>
<div class="cell num" style="left:1061px;top:360px;width:110.25px;text-align:right;text-decoration:underline;">200.00</div>
<div class="cell num" style="left:1186px;top:360px;width:110.25px;text-align:right;">3,448.00</div>
<div class="cell num" style="left:1311px;top:360px;width:110.25px;text-align:right;">17.24</div>
<div class="cell num" style="left:1436px;top:360px;width:110.25px;text-align:right;text-decoration:underline;">0.00</div>
<div class="cell num" style="left:1561px;top:360px;width:110.25px;text-align:right;">0.00</div>
<div class="a" style="left:0;top:400px;width:1700px;height:40px;background:#fff;border-bottom:1px solid #e3e4e8"></div>
<div class="cell num" style="left:0px;top:400px;width:61px;text-align:center;">9</div>
<div class="cell num" style="left:78px;top:400px;width:108px;font-size:15px;letter-spacing:0;">二级库</div>
<div class="cell num" style="left:203px;top:400px;width:108px;">01004</div>
<div class="cell num" style="left:328px;top:400px;width:108px;font-size:15px;letter-spacing:0;">心相印抽纸 ...</div>
<div class="cell num" style="left:453px;top:400px;width:108px;font-size:15px;letter-spacing:0;">150抽*3包...</div>
<div class="cell num" style="left:578px;top:400px;width:108px;font-size:15px;letter-spacing:0;">袋</div>
<div class="cell num" style="left:686px;top:400px;width:110.25px;text-align:right;">0.00</div>
<div class="cell num" style="left:811px;top:400px;width:110.25px;text-align:right;">0.00</div>
<div class="cell num" style="left:1061px;top:400px;width:110.25px;text-align:right;text-decoration:underline;">100.00</div>
<div class="cell num" style="left:1186px;top:400px;width:110.25px;text-align:right;">4,310.00</div>
<div class="cell num" style="left:1311px;top:400px;width:110.25px;text-align:right;">43.10</div>
<div class="cell num" style="left:1436px;top:400px;width:110.25px;text-align:right;text-decoration:underline;">0.00</div>
<div class="cell num" style="left:1561px;top:400px;width:110.25px;text-align:right;">0.00</div>
<div class="a" style="left:0;top:440px;width:1700px;height:40px;background:#effbff;border-bottom:1px solid #e3e4e8"></div>
<div class="cell num" style="left:0px;top:440px;width:61px;text-align:center;font-weight:bold;">10</div>
<div class="cell num" style="left:78px;top:440px;width:108px;font-size:15px;letter-spacing:0;">二级库</div>
<div class="cell num" style="left:203px;top:440px;width:108px;font-size:15px;letter-spacing:0;font-weight:bold;">小计</div>
<div class="cell num" style="left:686px;top:440px;width:110.25px;text-align:right;font-weight:bold;color:#ff1e1e;">-3.00</div>
<div class="cell num" style="left:811px;top:440px;width:110.25px;text-align:right;font-weight:bold;">0.00</div>
<div class="cell num" style="left:936px;top:440px;width:110.25px;text-align:right;font-weight:bold;">0.00</div>
<div class="cell num" style="left:1061px;top:440px;width:110.25px;text-align:right;font-weight:bold;text-decoration:underline;">305.00</div>
<div class="cell num" style="left:1186px;top:440px;width:110.25px;text-align:right;font-weight:bold;">10,222.00</div>
<div class="cell num" style="left:1311px;top:440px;width:110.25px;text-align:right;font-weight:bold;">43.10</div>
<div class="cell num" style="left:1436px;top:440px;width:110.25px;text-align:right;font-weight:bold;text-decoration:underline;">1.00</div>
<div class="cell num" style="left:1561px;top:440px;width:110.25px;text-align:right;font-weight:bold;">2,000.00</div>
<div class="a" style="left:61px;top:119px;width:1600px;height:1px;background:repeating-linear-gradient(90deg,transparent 0 1px,#fbfbfc 1px 2px,transparent 2px 125px)"></div>
<div class="a" style="left:61px;top:159px;width:1600px;height:1px;background:repeating-linear-gradient(90deg,transparent 0 1px,#fbfbfc 1px 2px,transparent 2px 125px)"></div>
<div class="a" style="left:61px;top:199px;width:1600px;height:1px;background:repeating-linear-gradient(90deg,transparent 0 1px,#fbfbfc 1px 2px,transparent 2px 125px)"></div>
<div class="a" style="left:61px;top:239px;width:1600px;height:1px;background:repeating-linear-gradient(90deg,transparent 0 1px,#fbfbfc 1px 2px,transparent 2px 125px)"></div>
<div class="a" style="left:61px;top:279px;width:1600px;height:1px;background:repeating-linear-gradient(90deg,transparent 0 1px,#fbfbfc 1px 2px,transparent 2px 125px)"></div>
<div class="a" style="left:61px;top:319px;width:1600px;height:1px;background:repeating-linear-gradient(90deg,transparent 0 1px,#fbfbfc 1px 2px,transparent 2px 125px)"></div>
<div class="a" style="left:61px;top:359px;width:1600px;height:1px;background:repeating-linear-gradient(90deg,transparent 0 1px,#fbfbfc 1px 2px,transparent 2px 125px)"></div>
<div class="a" style="left:61px;top:399px;width:1600px;height:1px;background:repeating-linear-gradient(90deg,transparent 0 1px,#fbfbfc 1px 2px,transparent 2px 125px)"></div>
<div class="a" style="left:61px;top:439px;width:1600px;height:1px;background:repeating-linear-gradient(90deg,transparent 0 1px,#fbfbfc 1px 2px,transparent 2px 125px)"></div>
<div class="a" style="left:0;top:476px;width:1700px;height:42px;background:#fcefdb;border-top:1px solid #e2e2e2;border-bottom:2px solid #dcdcdc"></div>
<div class="a" style="left:61px;top:476px;width:1px;height:60px;background:#e0e0e0"></div>
<div class="cell" style="left:78px;top:478px;width:100px;font-size:15px">合计</div>
<div class="cell num" style="left:686px;top:478px;width:110.4px;text-align:right;font-weight:bold;color:#222;letter-spacing:0.4px">24,928.00</div>
<div class="cell num" style="left:811px;top:478px;width:110.4px;text-align:right;font-weight:bold;color:#222;letter-spacing:0.4px">934,615.73</div>
<div class="cell num" style="left:936px;top:478px;width:110.4px;text-align:right;font-weight:bold;color:#222;letter-spacing:0.4px">47.00</div>
<div class="cell num" style="left:1061px;top:478px;width:110.4px;text-align:right;font-weight:bold;color:#222;letter-spacing:0.4px">65,319.00</div>
<div class="cell num" style="left:1186px;top:478px;width:110.4px;text-align:right;font-weight:bold;color:#222;letter-spacing:0.4px">4,619,450....</div>
<div class="cell num" style="left:1311px;top:478px;width:110.4px;text-align:right;font-weight:bold;color:#222;letter-spacing:0.4px">0.20</div>
<div class="cell num" style="left:1436px;top:478px;width:110.4px;text-align:right;font-weight:bold;color:#222;letter-spacing:0.4px">20,170.00</div>
<div class="cell num" style="left:1561px;top:478px;width:110.4px;text-align:right;font-weight:bold;color:#222;letter-spacing:0.4px">74,851.00</div>
<div class="a" style="left:0;top:518px;width:1700px;height:18px;background:#fff;border-bottom:1px solid #e3e3e3"></div>
<div class="a" style="left:61px;top:518px;width:1px;height:17px;background:#e0e0e0"></div>
<div class="a" style="left:65px;top:521px;width:1171px;height:11px;border-radius:6px;background:#b2b2b2"></div>
<div class="a" style="left:1631px;top:82px;width:11px;height:49px;border-radius:6px;background:#a9a9a9;opacity:0.9"></div>
</div></body></html>
